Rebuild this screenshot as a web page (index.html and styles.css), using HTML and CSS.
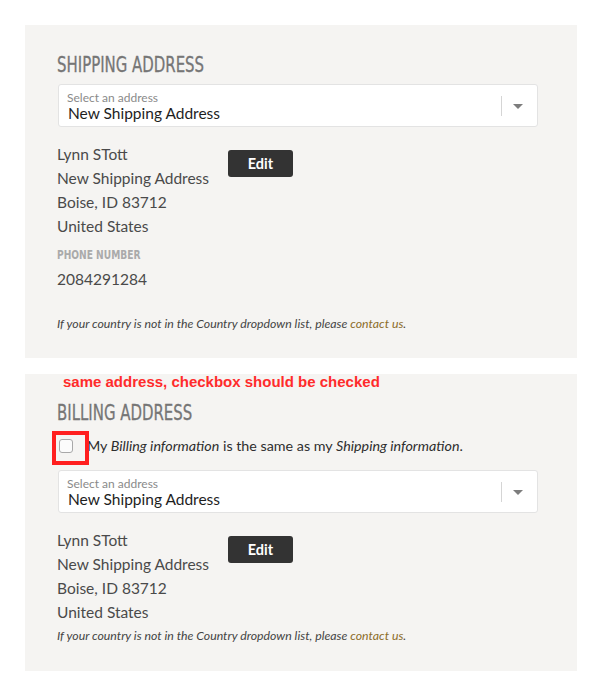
FILE: index.html
```html
<!DOCTYPE html>
<html>
<head>
<meta charset="utf-8">
<link rel="stylesheet" href="styles.css">
</head>
<body>
<div class="page">
  <section class="panel panel-shipping">
    <h2 class="heading"><span>SHIPPING ADDRESS</span></h2>
    <div class="select">
      <div class="select-text">
        <div class="select-label">Select an address</div>
        <div class="select-value">New Shipping Address</div>
      </div>
      <div class="select-divider"></div>
      <div class="select-arrow"></div>
    </div>
    <div class="address">
      <div class="address-lines">
        <div>Lynn STott</div>
        <div>New Shipping Address</div>
        <div>Boise, ID 83712</div>
        <div>United States</div>
      </div>
      <button class="edit">Edit</button>
    </div>
    <div class="phone-label"><span>PHONE NUMBER</span></div>
    <div class="phone">2084291284</div>
    <p class="note note-shipping">If your country is not in the Country dropdown list, please <a href="#">contact us</a>.</p>
  </section>

  <section class="panel panel-billing">
    <div class="annotation">same address, checkbox should be checked</div>
    <h2 class="heading"><span>BILLING ADDRESS</span></h2>
    <label class="same-row">
      <span class="checkbox-wrap">
        <span class="checkbox"></span>
        <span class="highlight"></span>
      </span>
      <span class="same-text">My <em>Billing information</em> is the same as my <em>Shipping information</em>.</span>
    </label>
    <div class="select">
      <div class="select-text">
        <div class="select-label">Select an address</div>
        <div class="select-value">New Shipping Address</div>
      </div>
      <div class="select-divider"></div>
      <div class="select-arrow"></div>
    </div>
    <div class="address">
      <div class="address-lines">
        <div>Lynn STott</div>
        <div>New Shipping Address</div>
        <div>Boise, ID 83712</div>
        <div>United States</div>
      </div>
      <button class="edit">Edit</button>
    </div>
    <p class="note note-billing">If your country is not in the Country dropdown list, please <a href="#">contact us</a>.</p>
  </section>
</div>
</body>
</html>
```

FILE: styles.css
```css
* { box-sizing: border-box; }

html, body {
  margin: 0;
  padding: 0;
  background: #ffffff;
}

body {
  font-family: Lato, "Open Sans", "Liberation Sans", sans-serif;
  color: #4a4a4a;
}

.page {
  padding: 25px 0 0 25px;
  display: flex;
  flex-direction: column;
  gap: 16px;
}

.panel {
  width: 552px;
  background: #f5f4f2;
  padding: 27px 39px 26px 32px;
}

.panel-billing {
  padding-top: 0;
  padding-bottom: 27px;
}

.heading {
  margin: 0;
  height: 26px;
  line-height: 26px;
  font-family: "Liberation Sans Narrow", "DejaVu Sans Condensed", "Liberation Sans", sans-serif;
  font-weight: normal;
  font-size: 22px;
  color: #767676;
  white-space: nowrap;
  -webkit-text-stroke: 0.3px #767676;
}

.heading span {
  display: inline-block;
  transform: scaleX(0.755);
  transform-origin: left center;
}

.select {
  margin: 6px 0 0 1px;
  width: 480px;
  height: 43px;
  background: #ffffff;
  border: 1px solid #e3e3e3;
  border-radius: 3px;
  display: flex;
  align-items: center;
  padding: 0 0 0 8px;
}

.select-text {
  flex: 1;
  padding-top: 1px;
}

.select-label {
  font-size: 12px;
  line-height: 13px;
  color: #8a8a8a;
}

.select-value {
  font-size: 15.5px;
  line-height: 18px;
  color: #1e1e1e;
  padding-left: 1px;
}

.select-divider {
  width: 1px;
  height: 20px;
  background: #d5d5d5;
  margin-top: 1px;
}

.select-arrow {
  width: 0;
  height: 0;
  border-left: 5px solid transparent;
  border-right: 5px solid transparent;
  border-top: 5px solid #7d7d7d;
  margin: 2px 14px 0 11px;
}

.address {
  margin-top: 15px;
  display: grid;
  grid-template-columns: 171px auto;
  align-items: start;
}

.address-lines {
  font-size: 15.5px;
  line-height: 24px;
  color: #4a4a4a;
}

.edit {
  justify-self: start;
  margin-top: 8px;
  width: 65px;
  height: 27px;
  border: none;
  border-radius: 3px;
  background: #333333;
  color: #ffffff;
  font-family: Lato, "Open Sans", sans-serif;
  font-weight: bold;
  font-size: 14.5px;
  line-height: 27px;
  padding: 0;
}

.phone-label {
  margin-top: 7px;
  height: 20px;
  line-height: 20px;
  font-family: "Liberation Sans Narrow", "DejaVu Sans Condensed", "Liberation Sans", sans-serif;
  font-weight: bold;
  font-size: 13px;
  color: #aaaaaa;
  white-space: nowrap;
}

.phone-label span {
  display: inline-block;
  transform: scaleX(0.78);
  transform-origin: left center;
}

.phone {
  margin-top: 2px;
  font-size: 15.5px;
  line-height: 24px;
  color: #4a4a4a;
}

.note {
  margin: 0;
  font-style: italic;
  font-size: 12.3px;
  line-height: 16px;
  color: #444444;
}

.note-shipping {
  margin-top: 25px;
}

.note-billing {
  margin-top: 4px;
}

.note a {
  color: #8c6d2a;
  text-decoration: none;
}

.annotation {
  margin-left: 6px;
  height: 15px;
  line-height: 15px;
  font-family: "Liberation Sans", Arial, sans-serif;
  font-weight: bold;
  font-size: 15px;
  color: #ff2b2b;
}

.panel-billing .heading {
  margin-top: 11px;
}

.same-row {
  display: flex;
  align-items: center;
  height: 28px;
  margin-top: 6px;
}

.checkbox-wrap {
  position: relative;
  width: 14px;
  height: 14px;
  margin-left: 2px;
  margin-right: 14px;
  flex: none;
}

.checkbox {
  display: block;
  width: 14px;
  height: 14px;
  border: 1px solid #a8a8a8;
  border-radius: 3px;
  background: #fbfbfb;
}

.highlight {
  position: absolute;
  left: -7px;
  top: -8px;
  width: 37px;
  height: 34px;
  border: 4px solid #ff1f1f;
}

.same-text {
  font-size: 14.3px;
  line-height: 20px;
  color: #2e2e2e;
  white-space: nowrap;
}

.same-text em {
  font-style: italic;
}

.panel-billing .select {
  margin-top: 10px;
}
```
